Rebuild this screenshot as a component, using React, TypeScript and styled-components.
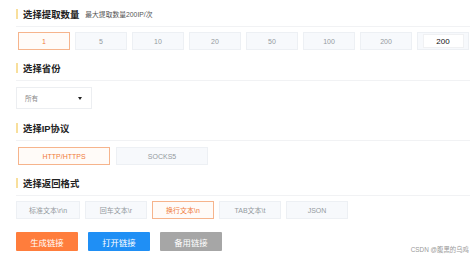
import React, { FC } from 'react';
import styled, { createGlobalStyle, css } from 'styled-components';

const GlobalStyle = createGlobalStyle`
  body {
    margin: 0;
    background: #ffffff;
    font-family: "Liberation Sans", "Noto Sans CJK SC", sans-serif;
  }
`;

const Page = styled.div`
  position: relative;
  width: 474px;
  height: 257px;
  padding: 2px 4px 0 16px;
  box-sizing: border-box;
  overflow: hidden;
`;

const Section = styled.section<{ $gap: number }>`
  margin-top: ${({ $gap }) => $gap}px;
`;

const Heading = styled.div`
  display: flex;
  align-items: center;
  height: 24px;
  border-bottom: 1px solid #f1f2f4;

  &::before {
    content: '';
    display: block;
    width: 2px;
    height: 10px;
    margin-right: 5px;
    background: #f8df9c;
  }
`;

const Title = styled.span`
  font-size: 9.4px;
  font-weight: 700;
  color: #222;
`;

const Hint = styled.span`
  margin-left: 6px;
  font-size: 6.8px;
  color: #555;
`;

const Row = styled.div<{ $gap: number; $indent?: number; $top?: number }>`
  display: flex;
  gap: ${({ $gap }) => $gap}px;
  margin-top: ${({ $top }) => $top ?? 6}px;
  padding-left: ${({ $indent }) => $indent ?? 0}px;
`;

const Option = styled.div<{ $w: number; $active?: boolean }>`
  display: flex;
  align-items: center;
  justify-content: center;
  width: ${({ $w }) => $w}px;
  height: 18px;
  box-sizing: border-box;
  border: 1px solid #edf0f4;
  background: #f7f9fc;
  font-size: 7px;
  color: #9499a0;
  white-space: nowrap;

  ${({ $active }) =>
    $active &&
    css`
      border-color: #f6b48c;
      background: #fffbf8;
      color: #f07b3c;
    `}
`;

const AmountInput = styled.div`
  display: flex;
  align-items: center;
  justify-content: center;
  width: 52px;
  height: 18px;
  box-sizing: border-box;
  border: 1px solid #edf0f4;
  background: #f7f9fc;
`;

const InputField = styled.div`
  display: flex;
  align-items: center;
  justify-content: center;
  width: 39px;
  height: 12px;
  background: #ffffff;
  border: 1px solid #f0f1f3;
  font-size: 8px;
  color: #111;
`;

const Select = styled.div`
  display: flex;
  align-items: center;
  justify-content: space-between;
  width: 76px;
  height: 22px;
  box-sizing: border-box;
  padding: 0 9px 0 8px;
  margin-top: 6px;
  border: 1px solid #eceef1;
  background: #fff;
  font-size: 6.6px;
  color: #888;
`;

const Caret = styled.span`
  width: 0;
  height: 0;
  border-left: 2.5px solid transparent;
  border-right: 2.5px solid transparent;
  border-top: 3px solid #222;
`;

const Action = styled.button<{ $bg: string }>`
  width: 62px;
  height: 19px;
  padding: 0;
  border: none;
  border-radius: 1px;
  background: ${({ $bg }) => $bg};
  color: #fff;
  font-family: inherit;
  font-size: 8.4px;
`;

const Watermark = styled.span`
  position: absolute;
  right: 5px;
  bottom: 3px;
  font-size: 6.4px;
  color: #9a9a9a;
`;

const amounts = ['1', '5', '10', '20', '50', '100', '200'];
const formats = [
  { label: '标准文本\\r\\n', w: 64 },
  { label: '回车文本\\r', w: 62 },
  { label: '换行文本\\n', w: 62, active: true },
  { label: 'TAB文本\\t', w: 62 },
  { label: 'JSON', w: 62 },
];

const App: FC = () => (
  <Page>
    <GlobalStyle />
    <Section $gap={0}>
      <Heading>
        <Title>选择提取数量</Title>
        <Hint>最大提取数量200IP/次</Hint>
      </Heading>
      <Row $gap={5} $indent={2} $top={5}>
        {amounts.map((a, i) => (
          <Option key={a + i} $w={52} $active={i === 0}>
            {a}
          </Option>
        ))}
        <AmountInput>
          <InputField>200</InputField>
        </AmountInput>
      </Row>
    </Section>

    <Section $gap={6}>
      <Heading>
        <Title>选择省份</Title>
      </Heading>
      <Select>
        所有
        <Caret />
      </Select>
    </Section>

    <Section $gap={7}>
      <Heading>
        <Title>选择IP协议</Title>
      </Heading>
      <Row $gap={6} $indent={2}>
        <Option $w={92} $active>
          HTTP/HTTPS
        </Option>
        <Option $w={92}>SOCKS5</Option>
      </Row>
    </Section>

    <Section $gap={6}>
      <Heading>
        <Title>选择返回格式</Title>
      </Heading>
      <Row $gap={5} $top={5}>
        {formats.map((f) => (
          <Option key={f.label} $w={f.w} $active={f.active}>
            {f.label}
          </Option>
        ))}
      </Row>
    </Section>

    <Row $gap={10} $top={13}>
      <Action $bg="#ff7d3c">生成链接</Action>
      <Action $bg="#1f8ff5">打开链接</Action>
      <Action $bg="#a6a6a6">备用链接</Action>
    </Row>

    <Watermark>CSDN @腹黑的乌鸡</Watermark>
  </Page>
);

export default App;
